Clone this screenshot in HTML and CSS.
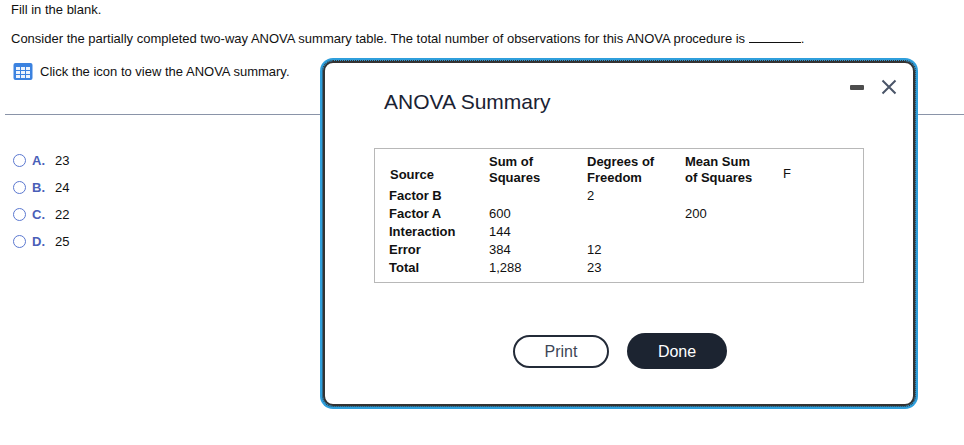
FILE: index.html
```html
<!DOCTYPE html>
<html lang="en">
<head>
<meta charset="utf-8">
<title>ANOVA Summary</title>
<link rel="stylesheet" href="styles.css">
</head>
<body>
<main class="page">
  <p class="line first">Fill in the blank.</p>
  <p class="line second">Consider the partially completed two-way ANOVA summary table. The total number of observations for this ANOVA procedure is <span class="blank"></span>.</p>
  <p class="line third">
    <svg class="grid-icon" width="20" height="17" viewBox="0 0 20 17" aria-hidden="true">
      <rect x="0.5" y="0" width="19" height="17" rx="2" fill="#3b82e0"/>
      <g fill="#eef4fd">
        <rect x="3" y="4" width="4" height="3"/><rect x="8" y="4" width="4" height="3"/><rect x="13" y="4" width="4" height="3"/>
        <rect x="3" y="8" width="4" height="3"/><rect x="8" y="8" width="4" height="3"/><rect x="13" y="8" width="4" height="3"/>
        <rect x="3" y="12" width="4" height="3"/><rect x="8" y="12" width="4" height="3"/><rect x="13" y="12" width="4" height="3"/>
      </g>
    </svg>
    <span>Click the icon to view the ANOVA summary.</span>
  </p>
  <hr class="rule">
  <ul class="options">
    <li class="option"><span class="radio"></span><span class="key">A.</span><span>23</span></li>
    <li class="option"><span class="radio"></span><span class="key">B.</span><span>24</span></li>
    <li class="option"><span class="radio"></span><span class="key">C.</span><span>22</span></li>
    <li class="option"><span class="radio"></span><span class="key">D.</span><span>25</span></li>
  </ul>
</main>

<section class="modal">
  <div class="controls">
    <span class="minimize"></span>
    <svg class="close" width="16" height="16" viewBox="0 0 16 16" aria-hidden="true">
      <path d="M1.5 1.5 L14.5 14.5 M14.5 1.5 L1.5 14.5" stroke="#4a5568" stroke-width="2" fill="none"/>
    </svg>
  </div>
  <h1 class="title">ANOVA Summary</h1>
  <div class="table-box">
    <table class="anova">
      <colgroup>
        <col class="col-source"><col class="col-num"><col class="col-num"><col class="col-num"><col class="col-f">
      </colgroup>
      <thead>
        <tr>
          <th class="src-head">Source</th>
          <th>Sum of<br>Squares</th>
          <th>Degrees of<br>Freedom</th>
          <th>Mean Sum<br>of Squares</th>
          <th class="f-head">F</th>
        </tr>
      </thead>
      <tbody>
        <tr><th>Factor B</th><td></td><td>2</td><td></td><td></td></tr>
        <tr><th>Factor A</th><td>600</td><td></td><td>200</td><td></td></tr>
        <tr><th>Interaction</th><td>144</td><td></td><td></td><td></td></tr>
        <tr><th>Error</th><td>384</td><td>12</td><td></td><td></td></tr>
        <tr><th>Total</th><td>1,288</td><td>23</td><td></td><td></td></tr>
      </tbody>
    </table>
  </div>
  <div class="actions">
    <button class="btn print" type="button">Print</button>
    <button class="btn done" type="button">Done</button>
  </div>
</section>
</body>
</html>
```
FILE: styles.css
```css
html, body {
  margin: 0;
  padding: 0;
  background: #fff;
}
body {
  width: 964px;
  height: 445px;
  overflow: hidden;
  position: relative;
  font-family: "Liberation Sans", Arial, sans-serif;
  font-size: 13px;
  color: #111;
}
.page {
  display: flex;
  flex-direction: column;
}
.line {
  margin: 0;
  padding-left: 11px;
  line-height: 14px;
}
.first { padding-top: 3px; }
.second { padding-top: 15px; }
.third {
  display: flex;
  align-items: center;
  gap: 7px;
  padding-left: 13px;
  padding-top: 17px;
}
.blank {
  display: inline-block;
  width: 52px;
  border-bottom: 1px solid #111;
}
.grid-icon { flex: none; }
.rule {
  margin: 34px 0 0 5px;
  border: 0;
  height: 1px;
  background: #8a94a8;
}
.options {
  list-style: none;
  margin: 0;
  padding: 38px 0 0 13px;
  display: flex;
  flex-direction: column;
  gap: 13px;
}
.option {
  display: flex;
  align-items: center;
  height: 14px;
}
.radio {
  box-sizing: border-box;
  width: 13px;
  height: 13px;
  border: 1.5px solid #5b78d0;
  border-radius: 50%;
  margin-right: 6px;
}
.key {
  width: 23px;
  font-weight: 700;
  color: #4a5fb8;
}
.modal {
  position: absolute;
  left: 323px;
  top: 61px;
  width: 592px;
  height: 345px;
  box-sizing: border-box;
  background: #fff;
  border: 2px solid #333;
  border-radius: 10px;
  box-shadow: 0 0 0 3px #2f9fdc;
  outline: 1px dotted #333;
}
.controls {
  position: absolute;
  right: 16px;
  top: 16px;
  display: flex;
  align-items: center;
  gap: 17px;
}
.minimize {
  width: 14px;
  height: 5px;
  background: #4d4d4d;
  border-radius: 1px;
}
.close { display: block; }
.title {
  margin: 0;
  padding: 26px 0 0 59px;
  font-size: 21px;
  line-height: 26px;
  font-weight: 400;
  color: #1a2233;
}
.table-box {
  box-sizing: border-box;
  width: 490px;
  height: 135px;
  margin: 33px 0 0 49px;
  border: 1px solid #b8b8b8;
  padding: 4px 0 0 14px;
}
.anova {
  border-collapse: collapse;
  table-layout: fixed;
  width: 474px;
  font-size: 13px;
  color: #111;
}
.col-source { width: 100px; }
.col-num { width: 98px; }
.col-f { width: 80px; }
.anova th, .anova td {
  box-sizing: border-box;
  padding: 0;
  text-align: left;
  vertical-align: middle;
  height: 18px;
  line-height: 16px;
  white-space: nowrap;
}
.anova thead th { height: 34px; }
.anova .src-head { padding: 10px 0 0 1px; }
.anova .f-head { font-weight: 400; padding-top: 8px; }
.actions {
  display: flex;
  align-items: center;
  gap: 18px;
  margin: 50px 0 0 188px;
}
.btn {
  font-family: "Liberation Sans", Arial, sans-serif;
  font-size: 16px;
  border-radius: 18px;
  cursor: pointer;
  padding: 1px 0 0;
}
.print {
  width: 96px;
  height: 33px;
  background: #fff;
  color: #3d4656;
  border: 2px solid #232b38;
}
.done {
  width: 100px;
  height: 36px;
  background: #1c2431;
  color: #fff;
  border: 0;
}
```
